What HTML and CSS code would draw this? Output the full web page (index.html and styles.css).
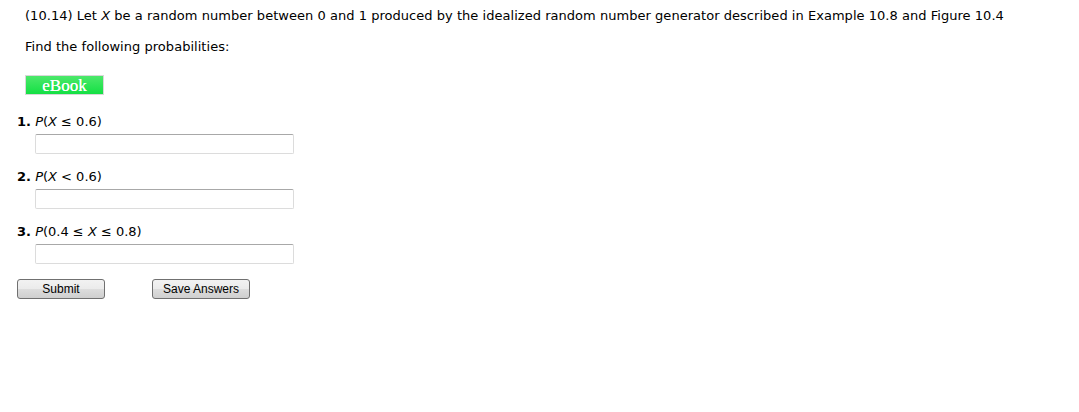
FILE: index.html
```html
<!DOCTYPE html>
<html>
<head>
<meta charset="utf-8">
<link rel="stylesheet" href="styles.css">
</head>
<body>
<div class="page">
  <div class="intro">
    <p class="stem">(10.14) Let <i>X</i> be a random number between 0 and 1 produced by the idealized random number generator described in Example 10.8 and Figure 10.4</p>
    <p class="stem find">Find the following probabilities:</p>
    <div class="ebook">eBook</div>
  </div>
  <div class="questions">
    <div class="q">
      <div class="qlabel"><b>1.</b> <i>P</i>(<i>X</i> ≤ 0.6)</div>
      <div class="field"></div>
    </div>
    <div class="q">
      <div class="qlabel"><b>2.</b> <i>P</i>(<i>X</i> &lt; 0.6)</div>
      <div class="field"></div>
    </div>
    <div class="q">
      <div class="qlabel"><b>3.</b> <i>P</i>(0.4 ≤ <i>X</i> ≤ 0.8)</div>
      <div class="field"></div>
    </div>
  </div>
  <div class="actions">
    <button class="btn submit">Submit</button>
    <button class="btn save">Save Answers</button>
  </div>
</div>
</body>
</html>
```
FILE: styles.css
```css
html, body {
  margin: 0;
  padding: 0;
  background: #ffffff;
}
.page {
  font-family: "DejaVu Sans", Verdana, sans-serif;
  font-size: 13px;
  color: #000;
  padding-top: 8px;
}
.intro {
  padding-left: 25px;
}
.stem {
  margin: 0;
  line-height: 16px;
  letter-spacing: 0.035px;
}
.find {
  margin-top: 15px;
}
.ebook {
  margin-top: 20px;
  width: 77px;
  height: 18px;
  border: 1px solid #d8d8d8;
  background: linear-gradient(to bottom, #4ce86a, #14e044);
  color: #fff;
  font-family: "Liberation Serif", "Times New Roman", serif;
  font-size: 17px;
  line-height: 19px;
  text-align: center;
  text-shadow: 0 0 0.4px #fff;
}
.questions {
  padding-left: 17px;
  margin-top: 19px;
}
.q {
  height: 55px;
}
.qlabel {
  line-height: 16px;
}
.field {
  margin-left: 18px;
  margin-top: 4px;
  width: 257px;
  height: 18px;
  border: 1px solid #dcdcdc;
  border-top-color: #a8a8a8;
  border-radius: 2px;
  background: #fff;
}
.actions {
  padding-left: 17px;
  display: flex;
  gap: 47px;
}
.btn {
  height: 20px;
  padding: 0;
  border: 1px solid #707070;
  border-radius: 3px;
  background: linear-gradient(to bottom, #f2f2f2 0%, #ebebeb 50%, #dddddd 51%, #cfcfcf 100%);
  font-family: "Liberation Sans", Arial, sans-serif;
  font-size: 12px;
  color: #000;
}
.submit {
  width: 88px;
}
.save {
  width: 98px;
}
```
